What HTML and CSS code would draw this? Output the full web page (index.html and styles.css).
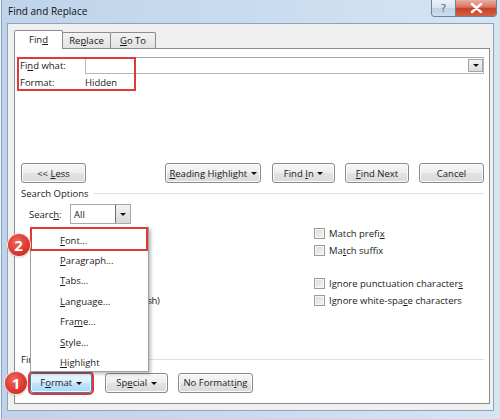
FILE: index.html
```html
<!DOCTYPE html>
<html>
<head>
<meta charset="utf-8">
<link rel="stylesheet" href="styles.css">
</head>
<body>
<div class="window">
  <div class="titlebar">
    <span class="title">Find and Replace</span>
    <div class="caption-btns">
      <span class="cb help">?</span>
      <span class="cb close"><svg width="13" height="10" viewBox="0 0 13 10"><path d="M2 1 L11 9 M11 1 L2 9" stroke="#fff" stroke-width="2.4" stroke-linecap="round"/></svg></span>
    </div>
  </div>
  <div class="client">
    <div class="tabs">
      <div class="tab active">Fin<u>d</u></div>
      <div class="tab">Re<u>p</u>lace</div>
      <div class="tab"><u>G</u>o To</div>
    </div>
    <div class="panel">
      <div class="row">
        <span class="lbl">Fi<u>n</u>d what:</span>
        <div class="combo"><span class="combo-btn"><span class="tri"></span></span></div>
      </div>
      <div class="row">
        <span class="lbl">Format:</span>
        <span>Hidden</span>
      </div>

      <div class="btn-row">
        <button class="btn w65">&lt;&lt; <u>L</u>ess</button>
        <div class="btn-group">
          <button class="btn w96"><u>R</u>eading Highlight <span class="tri"></span></button>
          <button class="btn w63">Find <u>I</u>n <span class="tri"></span></button>
          <button class="btn w64"><u>F</u>ind Next</button>
          <button class="btn w65">Cancel</button>
        </div>
      </div>

      <div class="group-head"><span>Search Options</span><span class="rule"></span></div>

      <div class="search-row">
        <span class="search-lbl">Searc<u>h</u>:</span>
        <div class="select"><span class="sel-text">All</span><span class="sel-btn"><span class="tri"></span></span></div>
      </div>

      <div class="options">
        <div class="opt"><span class="chk"></span>Matc<u>h</u> case</div>
        <div class="opt"><span class="chk"></span>Match prefi<u>x</u></div>
        <div class="opt"><span class="chk"></span>Find wh<u>o</u>le words only</div>
        <div class="opt"><span class="chk"></span>Ma<u>t</u>ch suffix</div>
        <div class="opt"><span class="chk"></span>Use wildcards</div>
        <div class="opt"></div>
        <div class="opt"><span class="chk"></span>Sounds li<u>k</u>e (English)</div>
        <div class="opt"><span class="chk"></span>Ignore punctuation character<u>s</u></div>
        <div class="opt"><span class="chk"></span>Find all <u>w</u>ord forms (English)</div>
        <div class="opt"><span class="chk"></span>Ignore white-spa<u>c</u>e characters</div>
      </div>

      <div class="group-head find-head"><span>Find</span><span class="rule"></span></div>

      <div class="bottom-row">
        <button class="btn btn-hot annotated w62">F<u>o</u>rmat <span class="tri"></span></button>
        <button class="btn w63">Sp<u>e</u>cial <span class="tri"></span></button>
        <button class="btn w75">No Formatt<u>i</u>ng</button>
      </div>

      <div class="menu">
        <div class="mi"><u>F</u>ont...</div>
        <div class="mi"><u>P</u>aragraph...</div>
        <div class="mi"><u>T</u>abs...</div>
        <div class="mi"><u>L</u>anguage...</div>
        <div class="mi">Fra<u>m</u>e...</div>
        <div class="mi"><u>S</u>tyle...</div>
        <div class="mi"><u>H</u>ighlight</div>
      </div>

      <div class="annot box-find"></div>
      <div class="annot box-font"></div>
      <div class="badge badge-2">2</div>
      <div class="badge badge-1">1</div>
    </div>
  </div>
</div>
</body>
</html>
```
FILE: styles.css
```css
html, body {
  margin: 0;
  padding: 0;
  background: #fff;
}
body {
  font-family: "Open Sans", "Noto Sans", sans-serif;
  font-size: 9.5px;
  color: #1a1a1a;
}
u {
  text-decoration-thickness: 1px;
  text-underline-offset: 1px;
}
.window {
  width: 500px;
  height: 419px;
  box-sizing: border-box;
  padding: 0 6px 8px 7px;
  display: flex;
  flex-direction: column;
  background: linear-gradient(to right, #bfd3ea 0%, #c9dbef 50%, #d6e5f4 100%);
  box-shadow: inset 1px 0 0 #eef4fb, inset 2px 0 0 #8ea4bd;
}
.titlebar {
  height: 23px;
  flex: none;
  display: flex;
  align-items: flex-start;
  justify-content: space-between;
}
.title {
  font-size: 10px;
  line-height: 22px;
  margin-left: 1px;
  color: #111;
}
.caption-btns {
  display: flex;
  margin-right: -3px;
  border: 1px solid #6f8198;
  border-top: none;
  border-radius: 0 0 4px 4px;
  overflow: hidden;
  height: 16px;
}
.cb {
  display: flex;
  align-items: center;
  justify-content: center;
}
.help {
  width: 23px;
  background: linear-gradient(#eaf1f8 0%, #d7e3f0 50%, #c1d2e6 51%, #cedcec 100%);
  border-right: 1px solid #6f8198;
  color: #5a6c82;
  font-family: "DejaVu Sans", sans-serif;
  font-size: 11px;
}
.close {
  width: 40px;
  background: linear-gradient(#eab0a2 0%, #d9735e 45%, #c7402a 52%, #d55f43 100%);
}
.client {
  flex: 1;
  box-sizing: border-box;
  border: 1px solid #8fa3ba;
  background: #f0f0f0;
  padding: 6px 3px 6px 6px;
  display: flex;
  flex-direction: column;
}
.tabs {
  height: 18px;
  flex: none;
  display: flex;
  align-items: flex-end;
}
.tab {
  box-sizing: border-box;
  height: 16px;
  border: 1px solid #898c95;
  border-bottom: none;
  background: linear-gradient(#f3f3f3, #e2e2e2);
  display: flex;
  align-items: center;
  justify-content: center;
  margin-left: -1px;
  border-radius: 2px 2px 0 0;
}
.tab:nth-child(1) { width: 49px; margin-left: 0; }
.tab:nth-child(2) { width: 49px; }
.tab:nth-child(3) { width: 46px; }
.tab.active {
  height: 19px;
  margin-bottom: -1px;
  background: #fff;
  position: relative;
  z-index: 2;
  padding-bottom: 2px;
}
.panel {
  flex: 1;
  position: relative;
  background: #fff;
  border: 1px solid #898c95;
  padding: 8px 5px 10px 6px;
  display: flex;
  flex-direction: column;
}
.row {
  height: 17px;
  display: flex;
  align-items: center;
}
.lbl {
  width: 65px;
  flex: none;
  margin-left: -1px;
}
.combo {
  flex: 1;
  height: 17px;
  box-sizing: border-box;
  border: 1px solid #b4b7bd;
  border-top-color: #a4a7ad;
  display: flex;
  justify-content: flex-end;
  align-items: center;
}
.combo-btn {
  width: 15px;
  height: 13px;
  box-sizing: border-box;
  border: 1px solid #a3a3a3;
  background: linear-gradient(#f4f4f4, #dcdcdc);
  display: flex;
  align-items: center;
  justify-content: center;
}
.tri {
  display: inline-block;
  width: 0;
  height: 0;
  border-left: 3px solid transparent;
  border-right: 3px solid transparent;
  border-top: 3px solid #111;
  vertical-align: middle;
}
.btn .tri { margin-left: 1px; margin-top: -1px; }
.btn-row {
  margin-top: 72px;
  height: 20px;
  display: flex;
  justify-content: space-between;
}
.btn-group {
  display: flex;
  gap: 10px;
}
.btn-group .btn:first-child { margin-right: 1px; }
.btn {
  display: block;
  height: 20px;
  box-sizing: border-box;
  border: 1px solid #8a8a8a;
  border-radius: 3px;
  background: linear-gradient(#f6f6f6 0%, #eeeeee 50%, #e3e3e3 51%, #dadada 100%);
  box-shadow: inset 0 0 0 1px #fbfbfb;
  font: inherit;
  line-height: 17px;
  text-align: center;
  color: #1a1a1a;
  padding: 0;
  white-space: nowrap;
}
.w62 { width: 62px; }
.w63 { width: 63px; }
.w64 { width: 64px; }
.w65 { width: 65px; }
.w75 { width: 75px; }
.w96 { width: 96px; }
.group-head {
  height: 12px;
  display: flex;
  align-items: center;
  margin-top: 4px;
}
.rule {
  flex: 1;
  height: 1px;
  background: #dfdfdf;
  margin-left: 5px;
}
.search-row {
  margin-top: 5px;
  height: 20px;
  display: flex;
  align-items: center;
  padding-left: 8px;
}
.search-lbl {
  width: 41px;
}
.select {
  width: 61px;
  height: 20px;
  box-sizing: border-box;
  border: 1px solid #a8a8a8;
  display: flex;
  align-items: stretch;
}
.sel-text {
  flex: 1;
  padding-left: 3px;
  display: flex;
  align-items: center;
}
.sel-btn {
  width: 15px;
  box-sizing: border-box;
  border-left: 1px solid #707070;
  background: linear-gradient(#f3f3f3, #d8d8d8);
  display: flex;
  align-items: center;
  justify-content: center;
}
.options {
  margin-top: 1px;
  display: grid;
  grid-template-columns: 293px 1fr;
  grid-auto-rows: 16.75px;
}
.opt {
  display: flex;
  align-items: center;
  white-space: nowrap;
}
.opt:nth-child(odd) {
  padding-left: 11px;
  letter-spacing: -0.35px;
}
.chk {
  width: 11px;
  height: 11px;
  flex: none;
  margin-right: 4px;
  box-sizing: border-box;
  border: 1px solid #9a9b9b;
  background: linear-gradient(135deg, #dadada, #f6f6f6);
  box-shadow: inset 0 0 0 1px #f7f7f7;
}
.find-head {
  margin-top: 45px;
}
.bottom-row {
  margin-top: 7px;
  height: 20px;
  display: flex;
  padding-left: 9px;
  gap: 13px;
}
.bottom-row .btn:nth-child(3) { margin-left: -3px; }
.btn-hot {
  border-color: #3c7fb1;
  background: linear-gradient(#eaf6fd 0%, #d9f0fc 50%, #bee6fd 51%, #a7d9f5 100%);
  box-shadow: inset 0 0 0 1px #f0f9fe;
}
.annotated {
  outline: 2px solid #dd3a3a;
  outline-offset: 0;
}
.menu {
  position: absolute;
  left: 15px;
  top: 178px;
  width: 119px;
  height: 145px;
  box-sizing: border-box;
  background: #fff;
  border: 1px solid #a0a0a0;
  box-shadow: 2px 2px 3px rgba(0, 0, 0, 0.25);
  padding: 2px 0 0 29px;
  z-index: 3;
}
.mi {
  height: 20.4px;
  display: flex;
  align-items: center;
}
.annot {
  position: absolute;
  box-sizing: border-box;
  border: 2px solid #dd3a3a;
  z-index: 4;
}
.box-find {
  left: 2px;
  top: 8px;
  width: 119px;
  height: 34px;
}
.box-font {
  left: 15px;
  top: 178px;
  width: 118px;
  height: 24px;
}
.badge {
  position: absolute;
  width: 22px;
  height: 22px;
  border-radius: 50%;
  background: radial-gradient(circle at 40% 35%, #f0675c 0%, #dc3a31 55%, #b9231d 100%);
  box-shadow: 0 0 0 1px #fbe3e1, 0 1px 2px rgba(0, 0, 0, 0.4);
  color: #fff;
  font-family: "Open Sans", sans-serif;
  font-weight: bold;
  font-size: 15px;
  line-height: 22px;
  text-align: center;
  z-index: 5;
}
.badge-2 {
  left: -7.5px;
  top: 185px;
}
.badge-1 {
  left: -10px;
  top: 323px;
}
```
